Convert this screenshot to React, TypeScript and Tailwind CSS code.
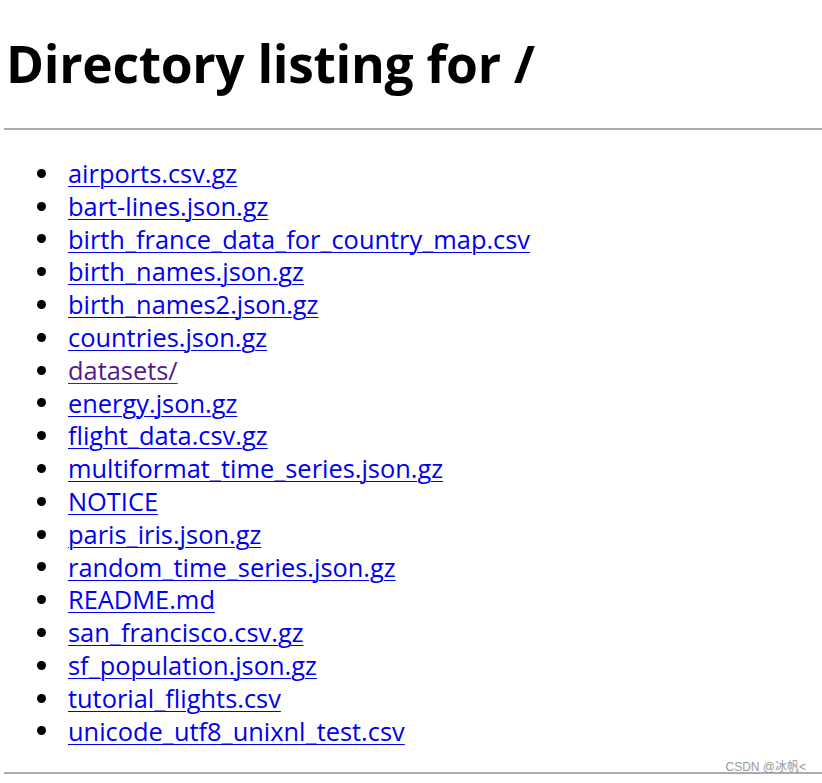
export default function App() {
  const files = [
    "airports.csv.gz",
    "bart-lines.json.gz",
    "birth_france_data_for_country_map.csv",
    "birth_names.json.gz",
    "birth_names2.json.gz",
    "countries.json.gz",
    "datasets/",
    "energy.json.gz",
    "flight_data.csv.gz",
    "multiformat_time_series.json.gz",
    "NOTICE",
    "paris_iris.json.gz",
    "random_time_series.json.gz",
    "README.md",
    "san_francisco.csv.gz",
    "sf_population.json.gz",
    "tutorial_flights.csv",
    "unicode_utf8_unixnl_test.csv",
  ];

  return (
    <div className="relative w-[822px] h-[783px] overflow-hidden bg-white text-black font-['Open_Sans',sans-serif]">
      <h1 className="pl-[6px] pt-[30px] text-[51.5px] leading-[66px] font-bold tracking-[-0.3px]">
        Directory listing for /
      </h1>
      <hr className="ml-[4px] mt-[32px] border-0 h-[2px] bg-[#ababab]" />
      <ul className="mt-[27px] text-[25.4px] leading-[32.8px]">
        {files.map((f) => (
          <li key={f} className="flex items-center">
            <span className="ml-[37px] mr-[22px] w-[9px] h-[9px] rounded-full bg-black shrink-0" />
            <a
              href="#"
              className={
                "underline underline-offset-[3px] decoration-1 " +
                (f === "datasets/" ? "text-[#551a8b]" : "text-[#0000ee]")
              }
            >
              {f}
            </a>
          </li>
        ))}
      </ul>
      <div className="mt-[25px] ml-[4px] relative">
        <hr className="border-0 h-[2px] bg-[#ababab]" />
        <span className="absolute right-[16px] -top-[14px] text-[12px] text-[#999] font-['Liberation_Sans','Noto_Sans_CJK_SC',sans-serif]">
          CSDN @冰帆&lt;
        </span>
      </div>
    </div>
  );
}
